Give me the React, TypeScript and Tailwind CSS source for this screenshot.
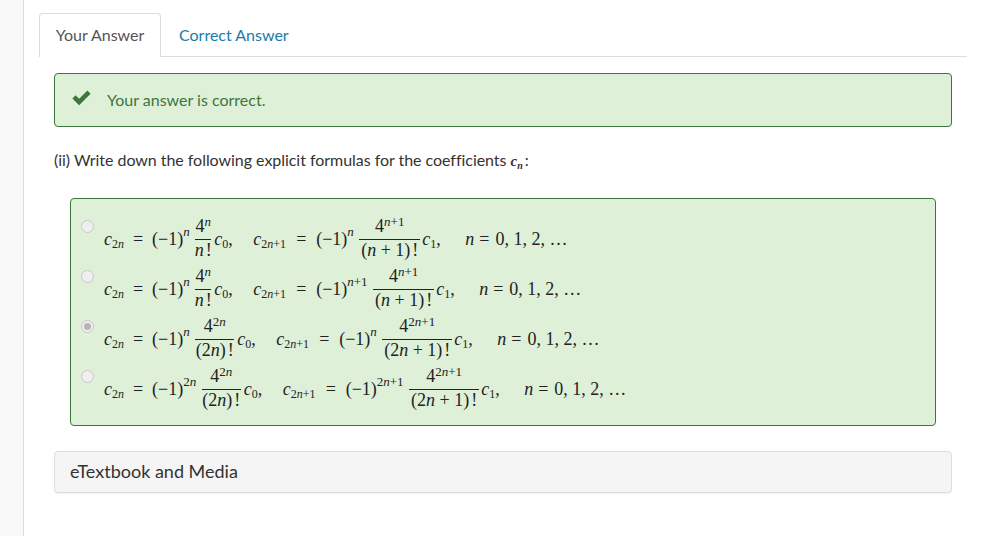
import type { ReactNode } from 'react';

function V({ children }: { children: ReactNode }) {
  return <i className="italic">{children}</i>;
}

// c with subscript, e.g. c_{2n}
function C({ sub }: { sub: ReactNode }) {
  return (
    <span className="whitespace-nowrap">
      <V>c</V>
      <sub className="text-[12px] leading-[0] align-[-3px] static">{sub}</sub>
    </span>
  );
}

function Pow({ base, exp, raise }: { base: ReactNode; exp: ReactNode; raise: string }) {
  return (
    <span className="whitespace-nowrap">
      {base}
      <sup className={`text-[13px] leading-[0] static ${raise}`}>{exp}</sup>
    </span>
  );
}

function Frac({ top, bottom, width }: { top: ReactNode; bottom: ReactNode; width: string }) {
  return (
    <span className={`flex flex-col items-center shrink-0 mt-[5px] ${width}`}>
      <span className="leading-[12px] h-[19px]">{top}</span>
      <span className="w-full h-px bg-[#222] shrink-0" />
      <span className="leading-[20px] h-[20px]">{bottom}</span>
    </span>
  );
}

function Radio({ checked }: { checked?: boolean }) {
  return (
    <span className="w-[13px] h-[13px] rounded-full border border-[#c8c8c8] bg-[#efefef] flex items-center justify-center shrink-0 mt-[5px]">
      {checked && <span className="w-[7px] h-[7px] rounded-full bg-[#b5b5b5]" />}
    </span>
  );
}

type RowProps = {
  checked?: boolean;
  firstPow: ReactNode;
  firstTop: ReactNode;
  firstBottom: ReactNode;
  firstWidth: string;
  secondPow: ReactNode;
  secondTop: ReactNode;
  secondBottom: ReactNode;
  secondWidth: string;
};

function FormulaRow(p: RowProps) {
  return (
    <div className="flex items-start h-[50px]">
      <Radio checked={p.checked} />
      <div className="flex items-start h-[50px] ml-[10px] text-[18px] leading-[48px] text-[#222] font-['Liberation_Serif',serif] whitespace-nowrap">
        <span className="w-[29px]"><C sub={<>2<V>n</V></>} /></span>
        <span className="w-[19px]">=</span>
        <Pow base="(−1)" exp={p.firstPow} raise="align-[9px]" />
        <span className="w-[5.5px]" />
        <Frac top={p.firstTop} bottom={p.firstBottom} width={p.firstWidth} />
        <span className="w-[39px] ml-[3px]"><C sub="0" />,</span>
        <span className="w-[43px]"><C sub={<>2<V>n</V>+1</>} /></span>
        <span className="w-[20px]">=</span>
        <Pow base="(−1)" exp={p.secondPow} raise="align-[9px]" />
        <span className="w-[5.5px]" />
        <Frac top={p.secondTop} bottom={p.secondBottom} width={p.secondWidth} />
        <span className="w-[43px] ml-[2px]"><C sub="1" />,</span>
        <span>
          <V>n</V>
          <span className="ml-[5px]">=</span>
          <span className="ml-[6px]">0, 1, 2, …</span>
        </span>
      </div>
    </div>
  );
}

const n = <V>n</V>;
const twoN = <>2<V>n</V></>;
const bang = <span className="ml-[2px]">!</span>;

export default function App() {
  return (
    <div className="flex min-h-[536px] bg-white font-['Lato',sans-serif] text-[#333]">
      {/* Side strip */}
      <div className="w-[24px] shrink-0 bg-[#f9f9f9] border-r border-[#dedede]" />

      <div className="w-[928px] ml-[15px] pt-[13px]">
        {/* Tabs */}
        <div className="flex h-[44px] border-b border-[#dddddd]">
          <div className="w-[122px] h-[44px] pb-[2px] border border-b-0 border-[#dddddd] rounded-t bg-white text-[16px] text-[#555] flex items-center justify-center">
            Your Answer
          </div>
          <div className="ml-[18px] h-[43px] text-[16px] text-[#1a7aa8] flex items-center">Correct Answer</div>
        </div>

        <div className="px-[15px]">
          {/* Feedback */}
          <div className="mt-[16px] h-[54px] w-[898px] border border-[#3c763d] rounded bg-[#dff0d8] flex items-center text-[#3c763d] text-[16px]">
            <svg viewBox="0 0 24 20" className="w-[19px] h-[16px] ml-[17px] -mt-[5px] shrink-0" fill="#3c763d">
              <path d="M0.5 10.5 L4.5 6.5 L9 11 L19.5 0.5 L23.5 4.5 L9 19 Z" />
            </svg>
            <span className="ml-[16px]">Your answer is correct.</span>
          </div>

          <p className="mt-[22px] h-[22px] leading-[22px] text-[16px] tracking-[-0.04px] text-[#333]">
            (ii) Write down the following explicit formulas for the coefficients{' '}
            <span className="font-['Liberation_Serif',serif] italic font-bold text-[15px]">c</span>
            <sub className="font-['Liberation_Serif',serif] italic font-bold text-[10px] static align-[-3px] leading-[0]">n</sub>
            <span className="ml-[2px]">:</span>
          </p>

          {/* Options */}
          <div className="mt-[27px] w-[866px] h-[228px] ml-[16px] border border-[#3c763d] rounded bg-[#dff0d8] pl-[10px] pt-[16px]">
            <FormulaRow
              firstPow={n}
              firstTop={<Pow base="4" exp={n} raise="align-[6px]" />}
              firstBottom={<>{n}{bang}</>}
              firstWidth="w-[16px]"
              secondPow={n}
              secondTop={<Pow base="4" exp={<>{n}+1</>} raise="align-[6px]" />}
              secondBottom={<>({n} + 1){bang}</>}
              secondWidth="w-[61px]"
            />
            <FormulaRow
              firstPow={n}
              firstTop={<Pow base="4" exp={n} raise="align-[6px]" />}
              firstBottom={<>{n}{bang}</>}
              firstWidth="w-[16px]"
              secondPow={<>{n}+1</>}
              secondTop={<Pow base="4" exp={<>{n}+1</>} raise="align-[6px]" />}
              secondBottom={<>({n} + 1){bang}</>}
              secondWidth="w-[61px]"
            />
            <FormulaRow
              checked
              firstPow={n}
              firstTop={<Pow base="4" exp={twoN} raise="align-[6px]" />}
              firstBottom={<>({twoN}){bang}</>}
              firstWidth="w-[39px]"
              secondPow={n}
              secondTop={<Pow base="4" exp={<>{twoN}+1</>} raise="align-[6px]" />}
              secondBottom={<>({twoN} + 1){bang}</>}
              secondWidth="w-[70px]"
            />
            <FormulaRow
              firstPow={twoN}
              firstTop={<Pow base="4" exp={twoN} raise="align-[6px]" />}
              firstBottom={<>({twoN}){bang}</>}
              firstWidth="w-[39px]"
              secondPow={<>{twoN}+1</>}
              secondTop={<Pow base="4" exp={<>{twoN}+1</>} raise="align-[6px]" />}
              secondBottom={<>({twoN} + 1){bang}</>}
              secondWidth="w-[70px]"
            />
          </div>

          {/* eTextbook panel */}
          <div className="mt-[25px] h-[42px] w-[898px] bg-[#f5f5f5] border border-[#dddddd] rounded flex items-center pl-[15px] pb-[2px] text-[18px] text-[#333] shadow-[0_1px_1px_rgba(0,0,0,0.05)]">
            eTextbook and Media
          </div>
        </div>
      </div>
    </div>
  );
}
